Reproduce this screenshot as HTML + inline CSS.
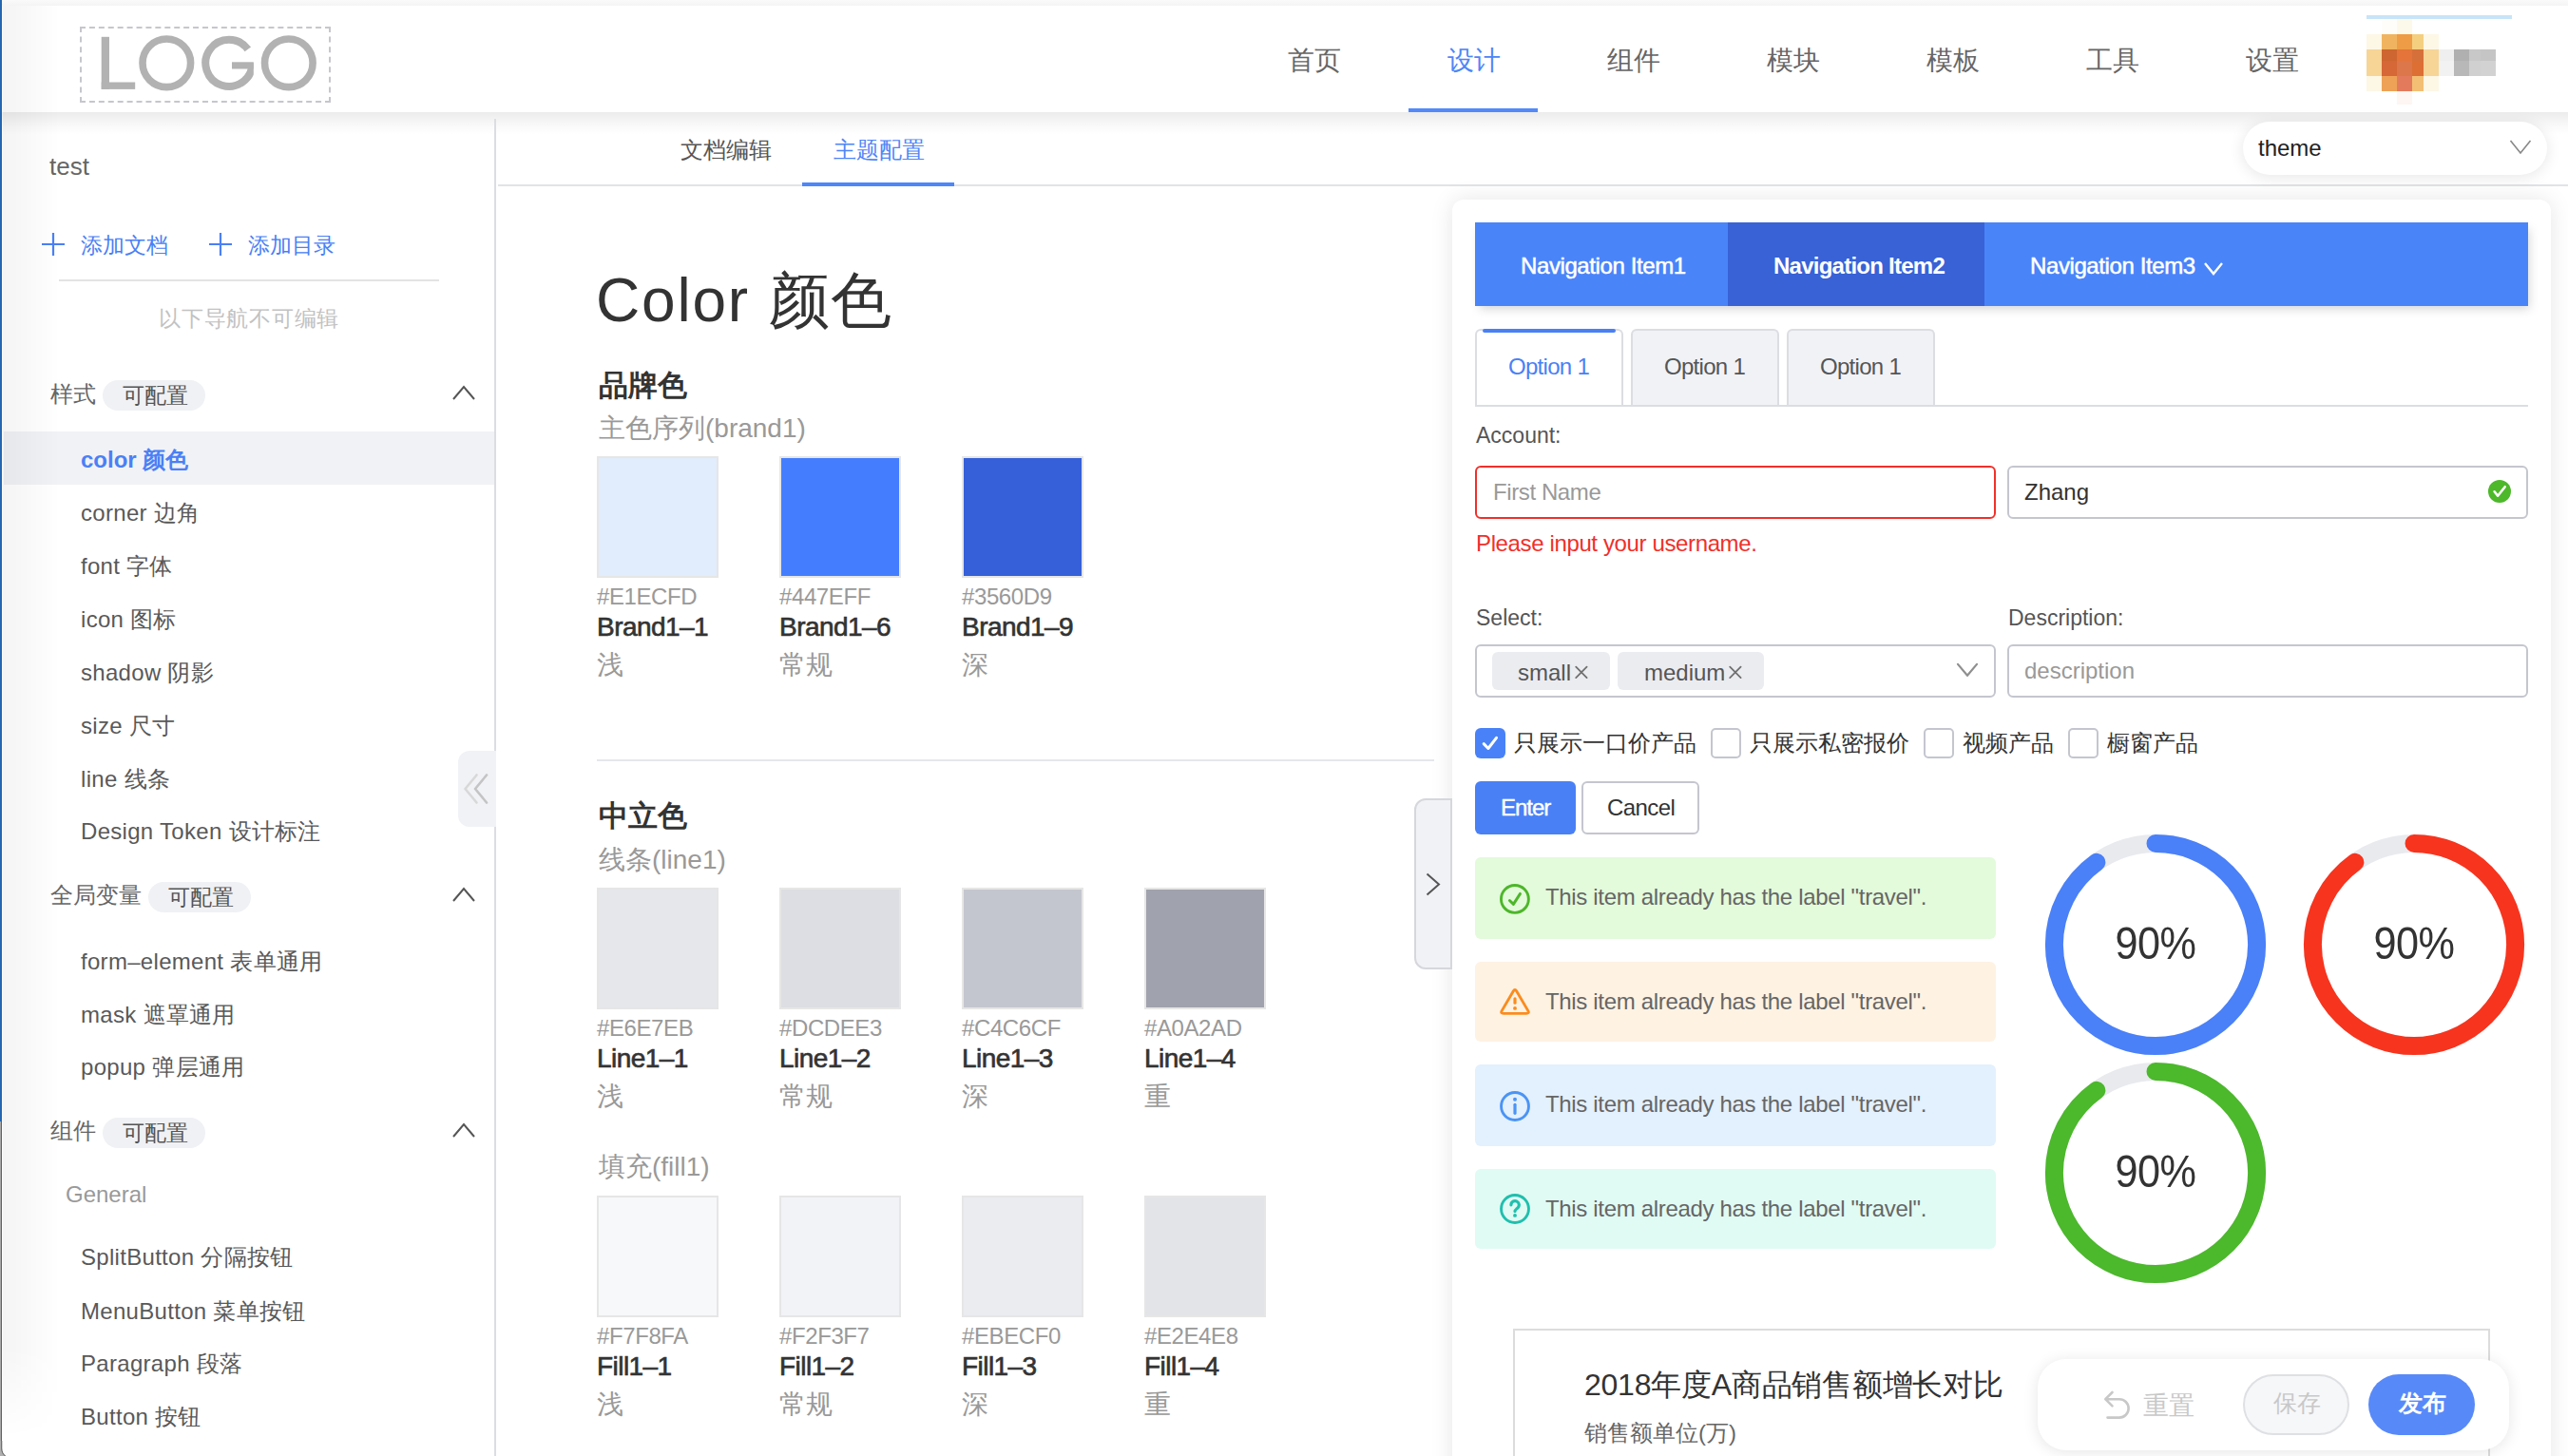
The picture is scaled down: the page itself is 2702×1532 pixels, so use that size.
<!DOCTYPE html>
<html><head><meta charset="utf-8">
<style>
*{margin:0;padding:0;box-sizing:border-box}
html,body{width:2702px;height:1532px;overflow:hidden;background:#fff;font-family:"Liberation Sans",sans-serif;position:relative}
.a{position:absolute}
.t{position:absolute;white-space:nowrap;line-height:1}
.hex{letter-spacing:-0.4px}
.nm{letter-spacing:-0.55px;font-weight:normal!important;-webkit-text-stroke:0.65px #333}
.opt{letter-spacing:-0.7px}
</style></head><body>

<!-- ============ HEADER ============ -->
<div class="a" style="left:0;top:0;width:2702px;height:6px;background:linear-gradient(#fafafa,#f4f4f4)"></div>
<div class="a" style="left:0;top:118px;width:2702px;height:24px;background:linear-gradient(rgba(0,0,0,0.08) 0,rgba(0,0,0,0.045) 35%,rgba(0,0,0,0.02) 65%,rgba(0,0,0,0) 100%)"></div>

<!-- logo -->
<div class="a" style="left:84px;top:28px;width:264px;height:80px;border:2px dashed #c6c7cd"></div>
<svg class="a" style="left:0;top:0" width="360" height="120">
  <g fill="#b2b2b2">
    <rect x="106.7" y="38.8" width="8.3" height="55.1"/>
    <rect x="106.7" y="86.5" width="35.5" height="7.4"/>
  </g>
  <g fill="none" stroke="#b2b2b2" stroke-width="7.6">
    <circle cx="175.3" cy="66.3" r="25.3"/>
    <circle cx="303.8" cy="66.3" r="25.3"/>
    <path clip-path="url(#gclip)" stroke-width="8" d="M265.5 66.3 A24.6 24.6 0 1 1 260.8 51.84"/>
  </g>
  <rect x="244" y="65.3" width="22.8" height="7.2" fill="#b2b2b2"/><defs><clipPath id="gclip"><rect x="200" y="20" width="66.8" height="90"/></clipPath></defs>
</svg>

<!-- top nav -->
<div class="t" style="left:1355px;top:50px;font-size:28px;color:#666">首页</div>
<div class="t" style="left:1523px;top:50px;font-size:28px;color:#4e86f7">设计</div>
<div class="t" style="left:1691px;top:50px;font-size:28px;color:#666">组件</div>
<div class="t" style="left:1859px;top:50px;font-size:28px;color:#666">模块</div>
<div class="t" style="left:2027px;top:50px;font-size:28px;color:#666">模板</div>
<div class="t" style="left:2195px;top:50px;font-size:28px;color:#666">工具</div>
<div class="t" style="left:2363px;top:50px;font-size:28px;color:#666">设置</div>
<div class="a" style="left:1482px;top:114px;width:136px;height:4px;background:#5389f8"></div>

<!-- avatar mosaic -->
<div class="a" style="left:2490px;top:16px;width:153px;height:4px;background:#c8e4f8"></div>
<div class="a" style="left:2506px;top:20px;width:16px;height:16px;background:#fefdfa"></div>
<div class="a" style="left:2522px;top:20px;width:16px;height:16px;background:#fdf9ea"></div>
<div class="a" style="left:2490px;top:36px;width:16px;height:16px;background:#fdf7e6"></div>
<div class="a" style="left:2506px;top:36px;width:16px;height:16px;background:#f0b460"></div>
<div class="a" style="left:2522px;top:36px;width:16px;height:16px;background:#ee9c45"></div>
<div class="a" style="left:2538px;top:36px;width:12px;height:16px;background:#f4cf7f"></div>
<div class="a" style="left:2550px;top:36px;width:16px;height:16px;background:#fdf7e6"></div>
<div class="a" style="left:2490px;top:52px;width:16px;height:12px;background:#f7d597"></div>
<div class="a" style="left:2506px;top:52px;width:16px;height:12px;background:#cd6630"></div>
<div class="a" style="left:2522px;top:52px;width:16px;height:12px;background:#e4743a"></div>
<div class="a" style="left:2538px;top:52px;width:12px;height:12px;background:#d6703a"></div>
<div class="a" style="left:2550px;top:52px;width:16px;height:12px;background:#f7d597"></div>
<div class="a" style="left:2566px;top:52px;width:16px;height:12px;background:#efefef"></div>
<div class="a" style="left:2582px;top:52px;width:16px;height:12px;background:#b0b0b0"></div>
<div class="a" style="left:2598px;top:52px;width:12px;height:12px;background:#c8c8c8"></div>
<div class="a" style="left:2610px;top:52px;width:16px;height:12px;background:#c5c5c5"></div>
<div class="a" style="left:2490px;top:64px;width:16px;height:16px;background:#f7d597"></div>
<div class="a" style="left:2506px;top:64px;width:16px;height:16px;background:#d66737"></div>
<div class="a" style="left:2522px;top:64px;width:16px;height:16px;background:#dc774c"></div>
<div class="a" style="left:2538px;top:64px;width:12px;height:16px;background:#dd6f35"></div>
<div class="a" style="left:2550px;top:64px;width:16px;height:16px;background:#f7d597"></div>
<div class="a" style="left:2566px;top:64px;width:16px;height:16px;background:#f2f2f2"></div>
<div class="a" style="left:2582px;top:64px;width:16px;height:16px;background:#b8b8b8"></div>
<div class="a" style="left:2598px;top:64px;width:12px;height:16px;background:#d0d0d0"></div>
<div class="a" style="left:2610px;top:64px;width:16px;height:16px;background:#d2d2d2"></div>
<div class="a" style="left:2490px;top:80px;width:16px;height:16px;background:#fdf7e6"></div>
<div class="a" style="left:2506px;top:80px;width:16px;height:16px;background:#eea257"></div>
<div class="a" style="left:2522px;top:80px;width:16px;height:16px;background:#e47a5c"></div>
<div class="a" style="left:2538px;top:80px;width:12px;height:16px;background:#f3bf74"></div>
<div class="a" style="left:2550px;top:80px;width:16px;height:16px;background:#fdf7e6"></div>
<div class="a" style="left:2522px;top:96px;width:16px;height:14px;background:#fef6f3"></div>


<!-- ============ SIDEBAR ============ -->

<div class="a" style="left:520px;top:125px;width:2px;height:1407px;background:#dcdde2"></div>
<div class="t" style="left:52px;top:162px;font-size:26px;color:#666">test</div>
<svg class="a" style="left:44px;top:245px" width="24" height="24"><path d="M12 0V24M0 12H24" stroke="#4a80f5" stroke-width="2.2"/></svg>
<div class="t" style="left:85px;top:247px;font-size:23px;color:#4a80f5">添加文档</div>
<svg class="a" style="left:220px;top:245px" width="24" height="24"><path d="M12 0V24M0 12H24" stroke="#4a80f5" stroke-width="2.2"/></svg>
<div class="t" style="left:261px;top:247px;font-size:23px;color:#4a80f5">添加目录</div>
<div class="a" style="left:62px;top:294px;width:400px;height:2px;background:#e3e3e3"></div>
<div class="t" style="left:167px;top:324px;font-size:23px;color:#c2c2c2;letter-spacing:0.75px">以下导航不可编辑</div>

<div class="t" style="left:53px;top:403px;font-size:24px;color:#666">样式</div>
<div class="a" style="left:108px;top:400px;width:108px;height:32px;border-radius:16px;background:#f0f1f4"></div>
<div class="t" style="left:129px;top:405px;font-size:23px;color:#555">可配置</div>
<svg class="a" style="left:476px;top:405px" width="24" height="16"><path d="M1 15L12 2L23 15" fill="none" stroke="#555" stroke-width="2"/></svg>

<div class="a" style="left:4px;top:454px;width:516px;height:56px;background:#f1f2f6"></div>
<div class="t" style="left:85px;top:472px;font-size:24px;color:#4a80f5;font-weight:bold">color 颜色</div>
<div class="t" style="left:85px;top:528px;font-size:24px;color:#595959;letter-spacing:0.3px">corner 边角</div>
<div class="t" style="left:85px;top:584px;font-size:24px;color:#595959;letter-spacing:0.3px">font 字体</div>
<div class="t" style="left:85px;top:640px;font-size:24px;color:#595959;letter-spacing:0.3px">icon 图标</div>
<div class="t" style="left:85px;top:696px;font-size:24px;color:#595959;letter-spacing:0.3px">shadow 阴影</div>
<div class="t" style="left:85px;top:752px;font-size:24px;color:#595959;letter-spacing:0.3px">size 尺寸</div>
<div class="t" style="left:85px;top:808px;font-size:24px;color:#595959;letter-spacing:0.3px">line 线条</div>
<div class="t" style="left:85px;top:863px;font-size:24px;color:#595959;letter-spacing:0.3px">Design Token 设计标注</div>

<div class="t" style="left:53px;top:930px;font-size:24px;color:#666">全局变量</div>
<div class="a" style="left:156px;top:928px;width:108px;height:32px;border-radius:16px;background:#f0f1f4"></div>
<div class="t" style="left:177px;top:933px;font-size:23px;color:#555">可配置</div>
<svg class="a" style="left:476px;top:933px" width="24" height="16"><path d="M1 15L12 2L23 15" fill="none" stroke="#555" stroke-width="2"/></svg>
<div class="t" style="left:85px;top:1000px;font-size:24px;color:#595959;letter-spacing:0.3px">form–element 表单通用</div>
<div class="t" style="left:85px;top:1056px;font-size:24px;color:#595959;letter-spacing:0.3px">mask 遮罩通用</div>
<div class="t" style="left:85px;top:1111px;font-size:24px;color:#595959;letter-spacing:0.3px">popup 弹层通用</div>

<div class="t" style="left:53px;top:1178px;font-size:24px;color:#666">组件</div>
<div class="a" style="left:108px;top:1176px;width:108px;height:32px;border-radius:16px;background:#f0f1f4"></div>
<div class="t" style="left:129px;top:1181px;font-size:23px;color:#555">可配置</div>
<svg class="a" style="left:476px;top:1181px" width="24" height="16"><path d="M1 15L12 2L23 15" fill="none" stroke="#555" stroke-width="2"/></svg>
<div class="t" style="left:69px;top:1245px;font-size:24px;color:#999">General</div>
<div class="t" style="left:85px;top:1311px;font-size:24px;color:#595959;letter-spacing:0.3px">SplitButton 分隔按钮</div>
<div class="t" style="left:85px;top:1368px;font-size:24px;color:#595959;letter-spacing:0.3px">MenuButton 菜单按钮</div>
<div class="t" style="left:85px;top:1423px;font-size:24px;color:#595959;letter-spacing:0.3px">Paragraph 段落</div>
<div class="t" style="left:85px;top:1479px;font-size:24px;color:#595959;letter-spacing:0.3px">Button 按钮</div>

<div class="a" style="left:3px;top:6px;width:60px;height:1526px;background:linear-gradient(90deg,rgba(0,0,0,0.045),rgba(0,0,0,0));-webkit-mask-image:linear-gradient(#000 0,#000 1412px,rgba(0,0,0,0) 1507px)"></div>
<!-- collapse btn -->
<div class="a" style="left:482px;top:790px;width:40px;height:80px;border-radius:12px 0 0 12px;background:#f1f2f6"></div>
<svg class="a" style="left:482px;top:790px" width="40" height="80"><path d="M19.5 25.5L7.5 40L19.5 54.5" fill="none" stroke="#d8d8d8" stroke-width="2.6" stroke-linecap="round" stroke-linejoin="round"/><path d="M30 25.5L18 40L30 54.5" fill="none" stroke="#c4c4c4" stroke-width="2.6" stroke-linecap="round" stroke-linejoin="round"/></svg>

<!-- ============ MAIN ============ -->
<div class="t" style="left:716px;top:146px;font-size:24px;color:#555">文档编辑</div>
<div class="t" style="left:877px;top:146px;font-size:24px;color:#4e86f7">主题配置</div>
<div class="a" style="left:524px;top:194px;width:2178px;height:2px;background:#e2e3e7"></div>
<div class="a" style="left:844px;top:192px;width:160px;height:4px;background:#4e86f7"></div>

<div class="a" style="left:2360px;top:128px;width:320px;height:56px;border-radius:28px;background:#fff;box-shadow:0 2px 16px rgba(0,0,0,0.10)"></div>
<div class="t" style="left:2376px;top:144px;font-size:24px;color:#222">theme</div>
<svg class="a" style="left:2640px;top:146px" width="24" height="18"><path d="M1.5 2L12 15L22.5 2" fill="none" stroke="#888" stroke-width="1.6"/></svg>

<div class="t" style="left:627px;top:284px;font-size:64px;color:#333;letter-spacing:1.8px">Color 颜色</div>
<div class="t" style="left:630px;top:390px;font-size:31px;color:#333;font-weight:bold">品牌色</div>
<div class="t" style="left:630px;top:437px;font-size:28px;color:#999">主色序列(brand1)</div>
<div class="a" style="left:628px;top:480px;width:128px;height:128px;border:2px solid #e6e6e6;background:#e1ecfd"></div>
<div class="t hex" style="left:628px;top:616px;font-size:24px;color:#999">#E1ECFD</div>
<div class="t nm" style="left:628px;top:646px;font-size:28px;color:#333;font-weight:bold">Brand1–1</div>
<div class="t" style="left:628px;top:686px;font-size:28px;color:#999">浅</div>
<div class="a" style="left:820px;top:480px;width:128px;height:128px;border:2px solid #e6e6e6;background:#447eff"></div>
<div class="t hex" style="left:820px;top:616px;font-size:24px;color:#999">#447EFF</div>
<div class="t nm" style="left:820px;top:646px;font-size:28px;color:#333;font-weight:bold">Brand1–6</div>
<div class="t" style="left:820px;top:686px;font-size:28px;color:#999">常规</div>
<div class="a" style="left:1012px;top:480px;width:128px;height:128px;border:2px solid #e6e6e6;background:#3560d9"></div>
<div class="t hex" style="left:1012px;top:616px;font-size:24px;color:#999">#3560D9</div>
<div class="t nm" style="left:1012px;top:646px;font-size:28px;color:#333;font-weight:bold">Brand1–9</div>
<div class="t" style="left:1012px;top:686px;font-size:28px;color:#999">深</div>
<div class="a" style="left:628px;top:799px;width:881px;height:2px;background:#e6e7eb"></div>
<div class="t" style="left:630px;top:843px;font-size:31px;color:#333;font-weight:bold">中立色</div>
<div class="t" style="left:630px;top:891px;font-size:28px;color:#999">线条(line1)</div>
<div class="a" style="left:628px;top:934px;width:128px;height:128px;border:2px solid #e6e6e6;background:#e6e7eb"></div>
<div class="t hex" style="left:628px;top:1070px;font-size:24px;color:#999">#E6E7EB</div>
<div class="t nm" style="left:628px;top:1100px;font-size:28px;color:#333;font-weight:bold">Line1–1</div>
<div class="t" style="left:628px;top:1140px;font-size:28px;color:#999">浅</div>
<div class="a" style="left:820px;top:934px;width:128px;height:128px;border:2px solid #e6e6e6;background:#dcdee3"></div>
<div class="t hex" style="left:820px;top:1070px;font-size:24px;color:#999">#DCDEE3</div>
<div class="t nm" style="left:820px;top:1100px;font-size:28px;color:#333;font-weight:bold">Line1–2</div>
<div class="t" style="left:820px;top:1140px;font-size:28px;color:#999">常规</div>
<div class="a" style="left:1012px;top:934px;width:128px;height:128px;border:2px solid #e6e6e6;background:#c4c6cf"></div>
<div class="t hex" style="left:1012px;top:1070px;font-size:24px;color:#999">#C4C6CF</div>
<div class="t nm" style="left:1012px;top:1100px;font-size:28px;color:#333;font-weight:bold">Line1–3</div>
<div class="t" style="left:1012px;top:1140px;font-size:28px;color:#999">深</div>
<div class="a" style="left:1204px;top:934px;width:128px;height:128px;border:2px solid #e6e6e6;background:#a0a2ad"></div>
<div class="t hex" style="left:1204px;top:1070px;font-size:24px;color:#999">#A0A2AD</div>
<div class="t nm" style="left:1204px;top:1100px;font-size:28px;color:#333;font-weight:bold">Line1–4</div>
<div class="t" style="left:1204px;top:1140px;font-size:28px;color:#999">重</div>
<div class="t" style="left:630px;top:1214px;font-size:28px;color:#999">填充(fill1)</div>
<div class="a" style="left:628px;top:1258px;width:128px;height:128px;border:2px solid #e6e6e6;background:#f7f8fa"></div>
<div class="t hex" style="left:628px;top:1394px;font-size:24px;color:#999">#F7F8FA</div>
<div class="t nm" style="left:628px;top:1424px;font-size:28px;color:#333;font-weight:bold">Fill1–1</div>
<div class="t" style="left:628px;top:1464px;font-size:28px;color:#999">浅</div>
<div class="a" style="left:820px;top:1258px;width:128px;height:128px;border:2px solid #e6e6e6;background:#f2f3f7"></div>
<div class="t hex" style="left:820px;top:1394px;font-size:24px;color:#999">#F2F3F7</div>
<div class="t nm" style="left:820px;top:1424px;font-size:28px;color:#333;font-weight:bold">Fill1–2</div>
<div class="t" style="left:820px;top:1464px;font-size:28px;color:#999">常规</div>
<div class="a" style="left:1012px;top:1258px;width:128px;height:128px;border:2px solid #e6e6e6;background:#ebecf0"></div>
<div class="t hex" style="left:1012px;top:1394px;font-size:24px;color:#999">#EBECF0</div>
<div class="t nm" style="left:1012px;top:1424px;font-size:28px;color:#333;font-weight:bold">Fill1–3</div>
<div class="t" style="left:1012px;top:1464px;font-size:28px;color:#999">深</div>
<div class="a" style="left:1204px;top:1258px;width:128px;height:128px;border:2px solid #e6e6e6;background:#e2e4e8"></div>
<div class="t hex" style="left:1204px;top:1394px;font-size:24px;color:#999">#E2E4E8</div>
<div class="t nm" style="left:1204px;top:1424px;font-size:28px;color:#333;font-weight:bold">Fill1–4</div>
<div class="t" style="left:1204px;top:1464px;font-size:28px;color:#999">重</div>


<!-- ============ RIGHT PANEL ============ -->
<div class="a" style="left:1528px;top:210px;width:1156px;height:1400px;border-radius:12px;background:#fff;box-shadow:0 0 24px rgba(0,0,0,0.1)"></div>
<div class="a" style="left:1488px;top:840px;width:40px;height:180px;border:2px solid #d6d7dc;border-radius:12px 0 0 12px;background:#f1f2f6"></div>
<svg class="a" style="left:1498px;top:916px" width="20" height="28"><path d="M3.5 3.5L16 14.5L3.5 25.5" fill="none" stroke="#555" stroke-width="2"/></svg>

<div class="a" style="left:1552px;top:234px;width:1108px;height:88px;background:#4a84f9;box-shadow:3px 5px 10px -2px rgba(0,0,0,0.17)"></div>
<div class="a" style="left:1818px;top:234px;width:270px;height:88px;background:#3862d6"></div>
<div class="t" style="left:1600px;top:268px;font-size:24px;color:#fff;letter-spacing:-0.4px;-webkit-text-stroke:0.5px #fff">Navigation Item1</div>
<div class="t" style="left:1866px;top:268px;font-size:24px;color:#fff;font-weight:bold;letter-spacing:-0.75px">Navigation Item2</div>
<div class="t" style="left:2136px;top:268px;font-size:24px;color:#fff;letter-spacing:-0.4px;-webkit-text-stroke:0.5px #fff">Navigation Item3</div>
<svg class="a" style="left:2318px;top:274px" width="24" height="16"><path d="M2 3L11 14L20 3" fill="none" stroke="#fff" stroke-width="2.4"/></svg>

<div class="a" style="left:1552px;top:346px;width:156px;height:82px;border:2px solid #dcdde2;border-bottom:none;border-radius:6px 6px 0 0;background:#fff"></div>
<div class="a" style="left:1716px;top:346px;width:156px;height:82px;border:2px solid #dcdde2;border-bottom:none;border-radius:6px 6px 0 0;background:#f1f2f6"></div>
<div class="a" style="left:1880px;top:346px;width:156px;height:82px;border:2px solid #dcdde2;border-bottom:none;border-radius:6px 6px 0 0;background:#f1f2f6"></div>
<div class="a" style="left:1552px;top:426px;width:1108px;height:2px;background:#dcdde2"></div>
<div class="a" style="left:1560px;top:346px;width:140px;height:4px;border-radius:2px;background:#4a80f5"></div>
<div class="t opt" style="left:1587px;top:374px;font-size:24px;color:#4a80f5">Option 1</div>
<div class="t opt" style="left:1751px;top:374px;font-size:24px;color:#555">Option 1</div>
<div class="t opt" style="left:1915px;top:374px;font-size:24px;color:#555">Option 1</div>

<div class="t" style="left:1553px;top:447px;font-size:23px;color:#555">Account:</div>
<div class="a" style="left:1552px;top:490px;width:548px;height:56px;border:2px solid #f0302a;border-radius:6px"></div>
<div class="t" style="left:1571px;top:506px;font-size:24px;color:#999;letter-spacing:-0.4px">First Name</div>
<div class="a" style="left:2112px;top:490px;width:548px;height:56px;border:2px solid #c4c6cf;border-radius:6px"></div>
<div class="t" style="left:2130px;top:506px;font-size:24px;color:#333">Zhang</div>
<svg class="a" style="left:2617px;top:505px" width="26" height="26"><circle cx="13" cy="12" r="12" fill="#4cb82a"/><path d="M7.6 12.3L11.1 16.7L18.7 7.2" fill="none" stroke="#fff" stroke-width="2.6" stroke-linecap="round" stroke-linejoin="round"/></svg>
<div class="t" style="left:1553px;top:560px;font-size:24px;color:#f0302a;letter-spacing:-0.37px">Please input your username.</div>

<div class="t" style="left:1553px;top:639px;font-size:23px;color:#555">Select:</div>
<div class="t" style="left:2113px;top:639px;font-size:23px;color:#555">Description:</div>
<div class="a" style="left:1552px;top:678px;width:548px;height:56px;border:2px solid #c4c6cf;border-radius:6px"></div>
<div class="a" style="left:1570px;top:686px;width:124px;height:40px;border-radius:6px;background:#ebecf0"></div>
<div class="t" style="left:1597px;top:696px;font-size:24px;color:#555">small</div>
<svg class="a" style="left:1656px;top:700px" width="16" height="16"><path d="M2.2 1.7L13.6 13.1M13.6 1.7L2.2 13.1" stroke="#707070" stroke-width="1.8" stroke-linecap="round"/></svg>
<div class="a" style="left:1702px;top:686px;width:154px;height:40px;border-radius:6px;background:#ebecf0"></div>
<div class="t" style="left:1730px;top:696px;font-size:24px;color:#555">medium</div>
<svg class="a" style="left:1818px;top:700px" width="16" height="16"><path d="M2.2 1.7L13.6 13.1M13.6 1.7L2.2 13.1" stroke="#707070" stroke-width="1.8" stroke-linecap="round"/></svg>
<svg class="a" style="left:2056px;top:694px" width="28" height="22"><path d="M4 4.9L14 16.8L24 4.9" fill="none" stroke="#8f8f8f" stroke-width="2.2" stroke-linecap="round" stroke-linejoin="round"/></svg>
<div class="a" style="left:2112px;top:678px;width:548px;height:56px;border:2px solid #c4c6cf;border-radius:6px"></div>
<div class="t" style="left:2130px;top:694px;font-size:24px;color:#999">description</div>

<div class="a" style="left:1552px;top:766px;width:32px;height:32px;border-radius:6px;background:#4982f8"></div>
<svg class="a" style="left:1552px;top:766px" width="32" height="32"><path d="M9.2 16.6L13.9 21.5L22.5 10.3" fill="none" stroke="#fff" stroke-width="3" stroke-linecap="round" stroke-linejoin="round"/></svg>
<div class="t" style="left:1593px;top:770px;font-size:24px;color:#333">只展示一口价产品</div>
<div class="a" style="left:1800px;top:766px;width:32px;height:32px;border-radius:5px;border:2px solid #c4c6cf"></div>
<div class="t" style="left:1841px;top:770px;font-size:24px;color:#333">只展示私密报价</div>
<div class="a" style="left:2024px;top:766px;width:32px;height:32px;border-radius:5px;border:2px solid #c4c6cf"></div>
<div class="t" style="left:2065px;top:770px;font-size:24px;color:#333">视频产品</div>
<div class="a" style="left:2176px;top:766px;width:32px;height:32px;border-radius:5px;border:2px solid #c4c6cf"></div>
<div class="t" style="left:2217px;top:770px;font-size:24px;color:#333">橱窗产品</div>

<div class="a" style="left:1552px;top:822px;width:106px;height:56px;border-radius:6px;background:#4a80f5"></div>
<div class="t" style="left:1579px;top:838px;font-size:24px;color:#fff;-webkit-text-stroke:0.4px #fff;letter-spacing:-1px">Enter</div>
<div class="a" style="left:1664px;top:822px;width:124px;height:56px;border-radius:6px;border:2px solid #c4c6cf"></div>
<div class="t" style="left:1691px;top:838px;font-size:24px;color:#333;letter-spacing:-0.6px">Cancel</div>

<div class="a" style="left:1552px;top:902px;width:548px;height:86px;border-radius:6px;background:#e3fadb"></div>
<svg class="a" style="left:1578px;top:930px" width="32" height="32"><circle cx="15.9" cy="15.9" r="14.45" fill="none" stroke="#4db62a" stroke-width="2.9"/><path d="M10.4 17.5L14.4 21.4L21.5 10.4" fill="none" stroke="#4db62a" stroke-width="2.9" stroke-linecap="round" stroke-linejoin="round"/></svg>
<div class="t" style="left:1626px;top:932px;font-size:24px;color:#666;letter-spacing:-0.33px">This item already has the label "travel".</div>
<div class="a" style="left:1552px;top:1012px;width:548px;height:84px;border-radius:6px;background:#fef2e3"></div>
<svg class="a" style="left:1578px;top:1040px" width="32" height="32"><path d="M17.77 3.02L29.73 23.38Q31.5 26.4 28 26.4L4 26.4Q0.5 26.4 2.27 23.38L14.23 3.02Q16 0 17.77 3.02Z" fill="none" stroke="#fa8c1e" stroke-width="2.9" stroke-linejoin="round"/><path d="M16 10.8V15.2" stroke="#fa8c1e" stroke-width="3.2" stroke-linecap="round"/><circle cx="16" cy="20.9" r="1.95" fill="#fa8c1e"/></svg>
<div class="t" style="left:1626px;top:1042px;font-size:24px;color:#666;letter-spacing:-0.33px">This item already has the label "travel".</div>
<div class="a" style="left:1552px;top:1120px;width:548px;height:86px;border-radius:6px;background:#e3f0fd"></div>
<svg class="a" style="left:1578px;top:1148px" width="32" height="32"><circle cx="16" cy="16" r="14.45" fill="none" stroke="#4a94f5" stroke-width="2.9"/><path d="M16 14.3V23.3" stroke="#4a94f5" stroke-width="3.2" stroke-linecap="round"/><circle cx="16" cy="8.85" r="2" fill="#4a94f5"/></svg>
<div class="t" style="left:1626px;top:1150px;font-size:24px;color:#666;letter-spacing:-0.33px">This item already has the label "travel".</div>
<div class="a" style="left:1552px;top:1230px;width:548px;height:84px;border-radius:6px;background:#e0fbf4"></div>
<svg class="a" style="left:1578px;top:1256px" width="32" height="32"><circle cx="16" cy="16" r="14.45" fill="none" stroke="#20bfad" stroke-width="2.9"/><path d="M11.9 11.8A4.2 4.2 0 1 1 18.6 15.2C17.2 16.4 16 17.2 16 18.6" fill="none" stroke="#20bfad" stroke-width="3.2" stroke-linecap="round"/><circle cx="16" cy="22.9" r="1.95" fill="#20bfad"/></svg>
<div class="t" style="left:1626px;top:1260px;font-size:24px;color:#666;letter-spacing:-0.33px">This item already has the label "travel".</div>

<svg class="a" style="left:2143px;top:868.6px" width="250" height="250"><circle cx="125" cy="125" r="106.6" fill="none" stroke="#e9eaee" stroke-width="19"/><circle cx="125" cy="125" r="106.6" fill="none" stroke="#4a80f8" stroke-width="19" stroke-linecap="round" stroke-dasharray="602.81 669.7875537453439" transform="rotate(-90 125 125)"/></svg>
<div class="t" style="left:2208px;top:969.4px;width:120px;text-align:center;font-size:48px;letter-spacing:-0.6px;transform:scaleX(0.9);color:#333">90%</div>
<svg class="a" style="left:2415px;top:868.6px" width="250" height="250"><circle cx="125" cy="125" r="106.6" fill="none" stroke="#e9eaee" stroke-width="19"/><circle cx="125" cy="125" r="106.6" fill="none" stroke="#f7341e" stroke-width="19" stroke-linecap="round" stroke-dasharray="602.81 669.7875537453439" transform="rotate(-90 125 125)"/></svg>
<div class="t" style="left:2480px;top:969.4px;width:120px;text-align:center;font-size:48px;letter-spacing:-0.6px;transform:scaleX(0.9);color:#333">90%</div>
<svg class="a" style="left:2143px;top:1108.6px" width="250" height="250"><circle cx="125" cy="125" r="106.6" fill="none" stroke="#e9eaee" stroke-width="19"/><circle cx="125" cy="125" r="106.6" fill="none" stroke="#4cb82c" stroke-width="19" stroke-linecap="round" stroke-dasharray="602.81 669.7875537453439" transform="rotate(-90 125 125)"/></svg>
<div class="t" style="left:2208px;top:1209.4px;width:120px;text-align:center;font-size:48px;letter-spacing:-0.6px;transform:scaleX(0.9);color:#333">90%</div>

<div class="a" style="left:1592px;top:1398px;width:1028px;height:200px;border:2px solid #dcdcdc"></div>
<div class="t" style="left:1667px;top:1441px;font-size:32px;color:#333;letter-spacing:-0.25px">2018年度A商品销售额增长对比</div>
<div class="t" style="left:1667px;top:1496px;font-size:24px;color:#666">销售额单位(万)</div>

<div class="a" style="left:2144px;top:1430px;width:496px;height:96px;border-radius:30px;background:#fff;box-shadow:0 2px 16px rgba(0,0,0,0.10)"></div>
<svg class="a" style="left:2212px;top:1462px" width="36" height="34"><path d="M10.5 3L3.3 10.2L10.5 17.4M3.3 10.2H17.9A9.7 9.7 0 0 1 17.9 29.6H5.5" fill="none" stroke="#c8c8c8" stroke-width="2.6" stroke-linecap="round" stroke-linejoin="round"/></svg>
<div class="t" style="left:2255px;top:1466px;font-size:27px;color:#c8c8c8">重置</div>
<div class="a" style="left:2360px;top:1446px;width:112px;height:64px;border-radius:32px;border:2px solid #dfe0e3;background:#f6f7f9"></div>
<div class="t" style="left:2392px;top:1464px;font-size:25px;color:#c8c8c8">保存</div>
<div class="a" style="left:2492px;top:1446px;width:112px;height:64px;border-radius:32px;background:#5889f9"></div>
<div class="t" style="left:2524px;top:1464px;font-size:25px;color:#fff;font-weight:bold">发布</div>

<!-- left window edge -->
<div class="a" style="left:0;top:0;width:2px;height:1180px;background:#2566b0"></div>
<div class="a" style="left:0;top:1180px;width:1.2px;height:352px;background:#a8a8a8"></div><div class="a" style="left:1.2px;top:1180px;width:1px;height:352px;background:#606060"></div>
<svg class="a" style="left:0;top:1516px" width="12" height="16"><path d="M0 0H2.2V8Q2.2 13 6.5 16H0Z" fill="#b0b0b0"/><path d="M1.7 0V8Q1.7 13.3 6 16.5" fill="none" stroke="#606060" stroke-width="1"/></svg>

</body></html>
